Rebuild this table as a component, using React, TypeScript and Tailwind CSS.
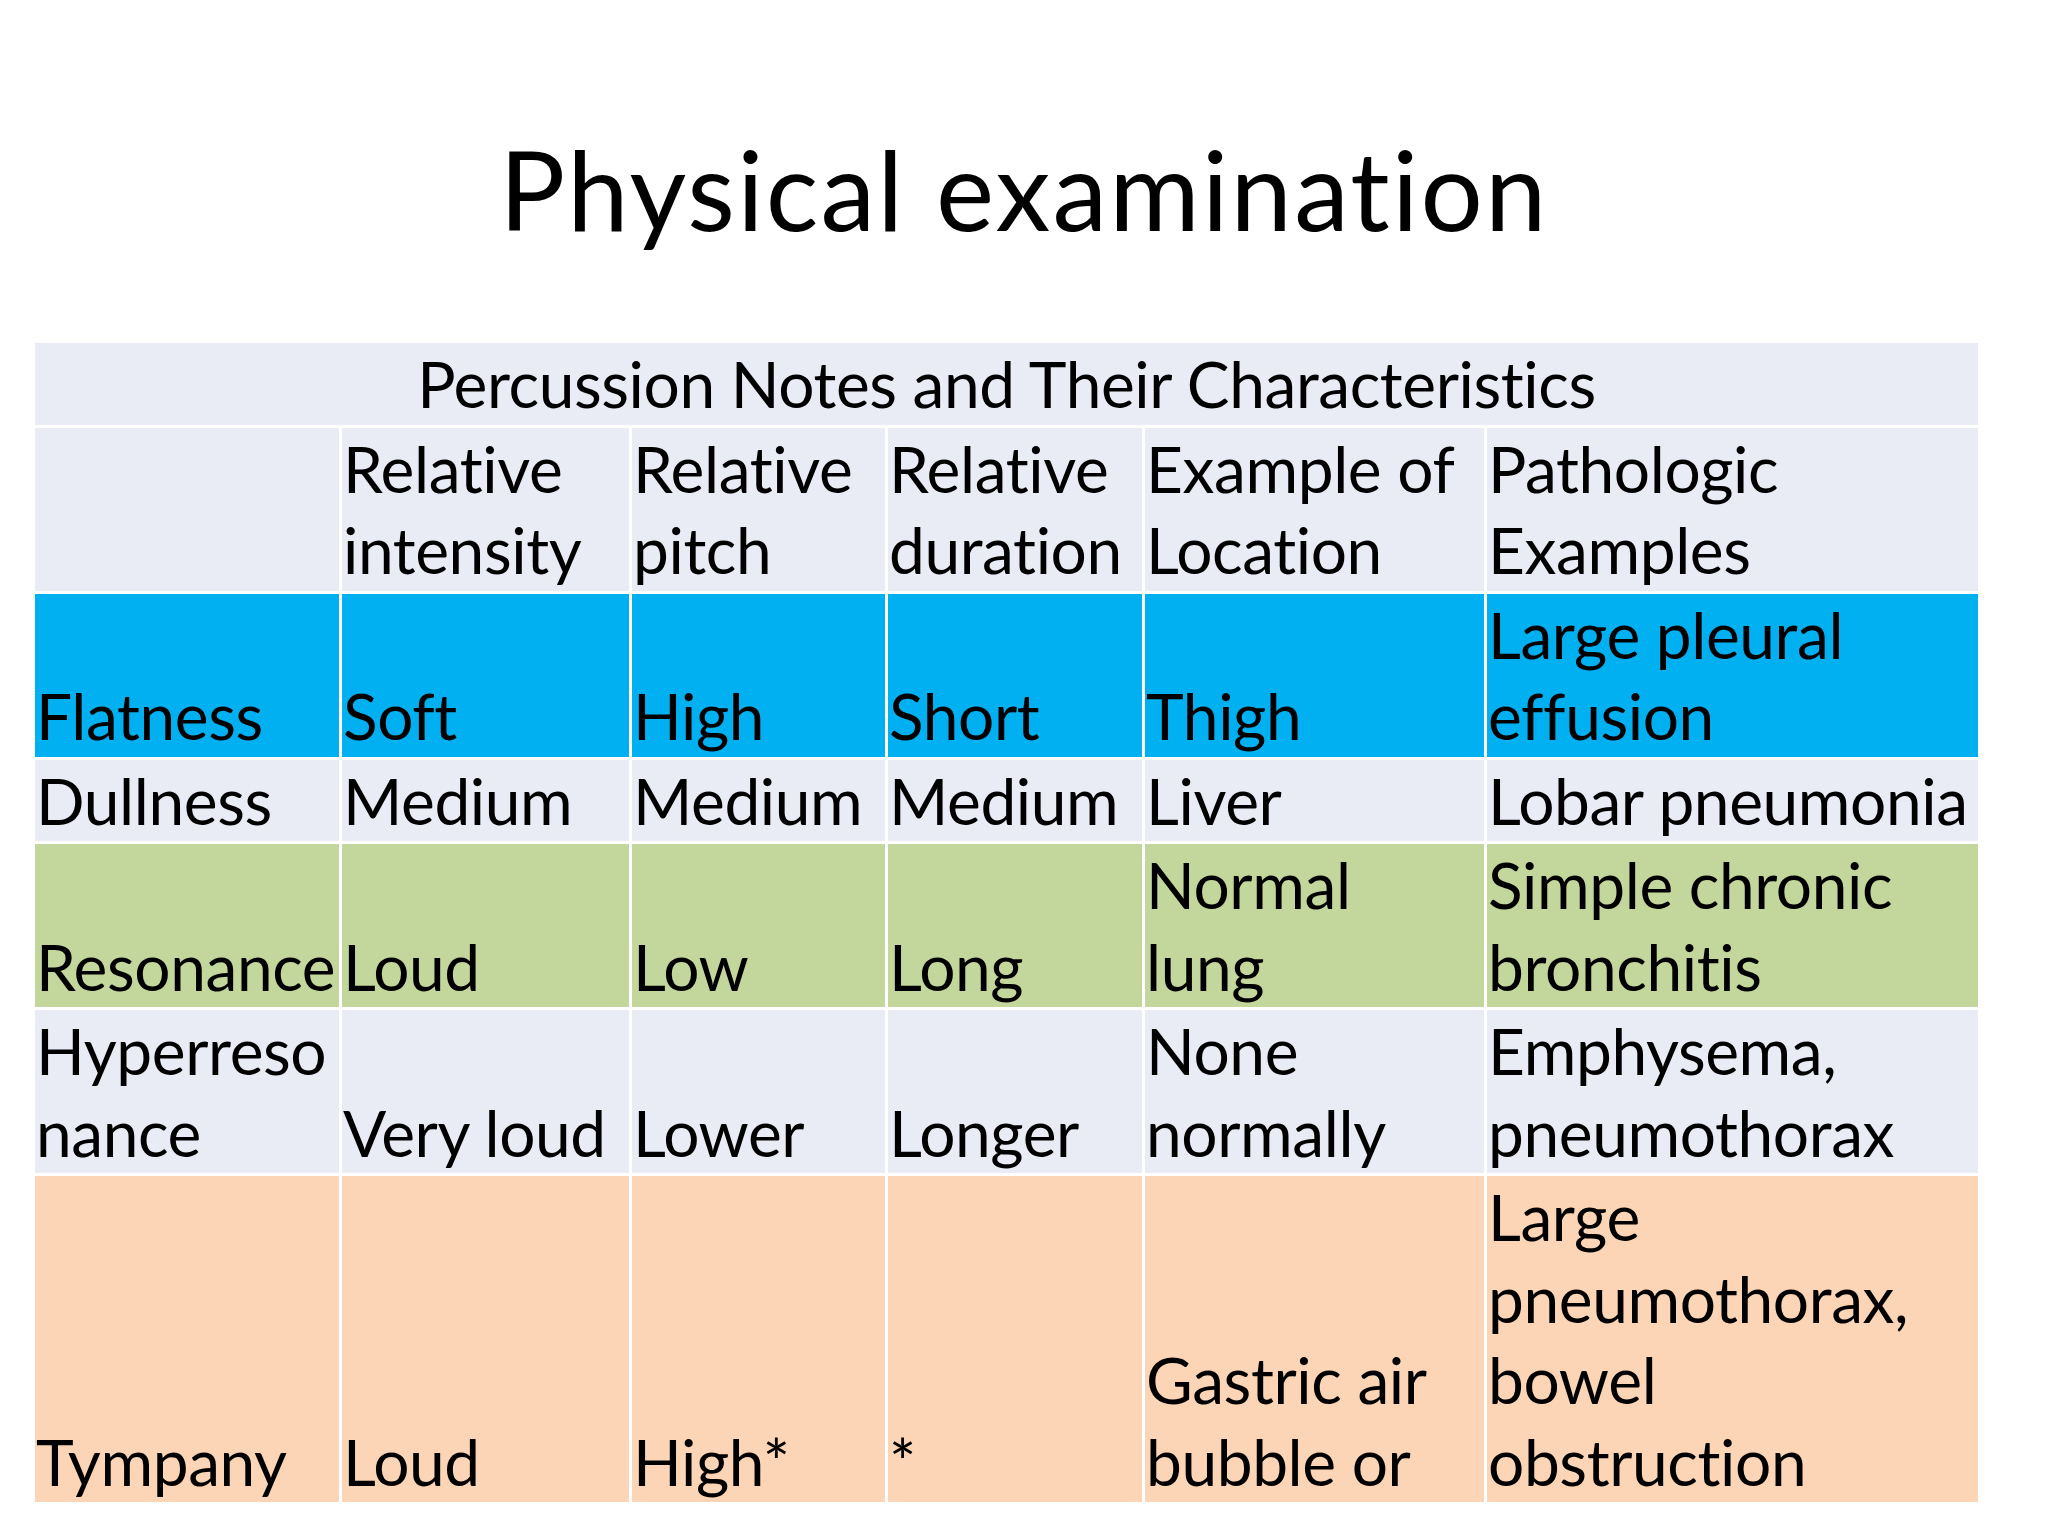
type Row = {
  bg: string;
  cells: string[][];
};

const rows: Row[] = [
  {
    bg: 'bg-[#e9ebf5]',
    cells: [[''], ['Relative', 'intensity'], ['Relative', 'pitch'], ['Relative', 'duration'], ['Example of', 'Location'], ['Pathologic', 'Examples']],
  },
  {
    bg: 'bg-[#00b0f0]',
    cells: [['Flatness'], ['Soft'], ['High'], ['Short'], ['Thigh'], ['Large pleural', 'effusion']],
  },
  {
    bg: 'bg-[#e9ebf5]',
    cells: [['Dullness'], ['Medium'], ['Medium'], ['Medium'], ['Liver'], ['Lobar pneumonia']],
  },
  {
    bg: 'bg-[#c3d69b]',
    cells: [['Resonance'], ['Loud'], ['Low'], ['Long'], ['Normal', 'lung'], ['Simple chronic', 'bronchitis']],
  },
  {
    bg: 'bg-[#e9ebf5]',
    cells: [['Hyperreso', 'nance'], ['Very loud'], ['Lower'], ['Longer'], ['None', 'normally'], ['Emphysema,', 'pneumothorax']],
  },
  {
    bg: 'bg-[#fbd5b5]',
    cells: [['Tympany'], ['Loud'], ['High*'], ['*'], ['Gastric air', 'bubble or'], ['Large', 'pneumothorax,', 'bowel', 'obstruction']],
  },
];

function Cell({ lines, bg }: { lines: string[]; bg: string }) {
  return (
    <div className={`${bg} flex flex-col justify-end pl-[1px]`}>
      {lines.map((line, i) => (
        <div key={i} className="whitespace-nowrap">
          {line || '\u00a0'}
        </div>
      ))}
    </div>
  );
}

export default function App() {
  return (
    <div
      className="w-[2048px] h-[1536px] bg-white text-black flex flex-col overflow-hidden [font-variant-ligatures:none]"
      style={{ fontFamily: 'Lato, "Open Sans", sans-serif' }}
    >
      <h1 className="mt-[133px] text-center text-[110px] leading-[110px] tracking-[2.2px] font-normal">
        Physical examination
      </h1>

      <div className="mt-[100px] ml-[35px] w-[1943px] grid grid-cols-[304px_287px_253px_254px_339px_491px] gap-[3px] text-[64px] leading-[81.5px] tracking-[-0.4px]">
        <div className="col-span-6 bg-[#e9ebf5] text-center">
          Percussion Notes and Their Characteristics
        </div>
        {rows.map((row, r) =>
          row.cells.map((lines, c) => <Cell key={`${r}-${c}`} lines={lines} bg={row.bg} />),
        )}
      </div>
    </div>
  );
}
